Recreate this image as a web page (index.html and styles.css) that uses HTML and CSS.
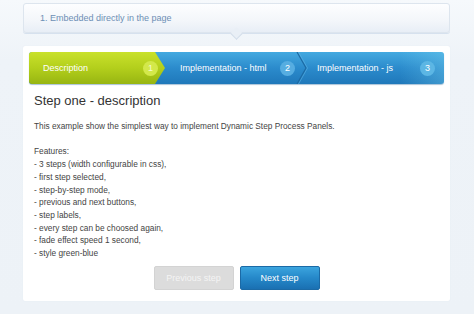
FILE: index.html
```html
<!DOCTYPE HTML>
<html>
    <head>
        <meta charset="UTF-8">
        <title>Dynamic Step Process Panels</title>
        <link rel="stylesheet" href="styles.css">
    </head>
    <body>
        <div id="wrap">
            <div class="demo-title">1. Embedded directly in the page</div>
            <div class="panel">
                <div class="steps">
                    <div class="step step-on">
                        <span class="label">Description</span><span class="num">1</span>
                    </div>
                    <div class="step step-two">
                        <span class="label">Implementation - html</span><span class="num">2</span>
                    </div>
                    <div class="step step-last">
                        <span class="label">Implementation - js</span><span class="num">3</span>
                    </div>
                    <svg class="sep" width="12" height="32" viewBox="0 0 12 32"><polyline points="1,0 10,16 1,32" fill="none" stroke="#1c6aa4" stroke-width="1.2"/><polyline points="2.5,0 11.5,16 2.5,32" fill="none" stroke="#5bb3e4" stroke-width="1" opacity=".6"/></svg>
                </div>
                <h2>Step one - description</h2>
                <p class="text">This example show the simplest way to implement Dynamic Step Process Panels.<br><br>Features:<br>- 3 steps (width configurable in css),<br>- first step selected,<br>- step-by-step mode,<br>- previous and next buttons,<br>- step labels,<br>- every step can be choosed again,<br>- fade effect speed 1 second,<br>- style green-blue</p>
                <div class="buttons">
                    <span class="btn btn-off">Previous step</span>
                    <span class="btn btn-next">Next step</span>
                </div>
            </div>
        </div>
    </body>
</html>
```

FILE: styles.css
```css
body{margin:0;font-family:"Liberation Sans",Arial,sans-serif;background:linear-gradient(to bottom,#f6f9fc 0,#eef3f8 60px,#edf2f7 100%);height:314px;overflow:hidden;}
h2,p{margin:0;}
#wrap{
    width: 427px;
    margin-left: 23px;
    padding-top: 3px;
}
.demo-title{
    position: relative;
    height: 28px;
    padding-left: 16px;
    font-size: 9px;
    line-height: 28px;
    color: #6d8fb5;
    border: 1px solid #dde5ee;
    border-radius: 3px;
    background: linear-gradient(to bottom,#fdfeff 0%,#f3f6fa 60%,#e8eef6 100%);
    box-shadow: 0 1px 0 #d6e1ee;
}
.demo-title:after{
    content: "";
    position: absolute;
    left: 208px;
    bottom: -6px;
    width: 8px;
    height: 8px;
    background: #e9eff6;
    border-right: 1px solid #d2dde9;
    border-bottom: 1px solid #d2dde9;
    transform: rotate(45deg);
}
.panel{
    margin-top: 13px;
    height: 249px;
    padding: 6px 6px 0;
    background: #fff;
    border-radius: 2px;
    box-shadow: 0 0 1px #dbe4ee;
}
.steps{
    position: relative;
    display: flex;
    height: 32px;
    border-radius: 3px;
    background: linear-gradient(to bottom,#43a9e0 0%,#2b8bcc 50%,#1f78ba 100%);
    box-shadow: 0 1px 1px #a9c3d8;
}
.step{
    position: relative;
    display: flex;
    align-items: center;
    width: 138px;
    height: 32px;
    font-size: 9px;
    color: #fff;
}
.step .label{
    flex: 1;
}
.step .num{
    width: 15px;
    height: 15px;
    border-radius: 50%;
    text-align: center;
    line-height: 15px;
    font-size: 9px;
}
.step-on{
    width: 136px;
    margin-right: -10px;
    z-index: 2;
    padding-left: 14px;
    box-sizing: border-box;
    border-radius: 3px 0 0 3px;
    background: linear-gradient(to bottom,#c9e12b 0%,#b3cf1c 50%,#97b512 100%);
    clip-path: polygon(0 0,calc(100% - 10px) 0,100% 50%,calc(100% - 10px) 100%,0 100%);
}
.step-on .num{
    margin-right: 7px;
    background: #d3e84a;
    color: #f4f9d0;
}
.step-two{
    width: 143px;
    padding-left: 25px;
    box-sizing: border-box;
}
.step-two .num{
    margin-right: 3px;
    background: #56ade1;
}
.step-last{
    flex: 1;
    padding-left: 19px;
    border-radius: 0 3px 3px 0;
    background: linear-gradient(to right,rgba(255,255,255,0) 70%,rgba(120,210,240,.35) 100%);
}
.step-last .num{
    margin-right: 9px;
    background: #5cb6e4;
}
.sep{
    position: absolute;
    left: 267px;
    top: 0;
}
h2{
    margin: 9px 0 0 5px;
    font-size: 13px;
    font-weight: normal;
    line-height: 16px;
    color: #333;
}
.text{
    margin: 11px 0 0 5px;
    font-size: 8.3px;
    line-height: 12.7px;
    color: #444;
}
.buttons{
    display: flex;
    justify-content: center;
    gap: 6px;
    margin-top: 6px;
}
.btn{
    width: 78px;
    height: 22px;
    font-size: 9px;
    line-height: 22px;
    text-align: center;
    color: #fff;
    border-radius: 2px;
}
.btn-off{
    background: #dcdcdc;
    border: 1px solid #d3d3d3;
    color: #f4f4f4;
}
.btn-next{
    background: linear-gradient(to bottom,#3ba4de 0%,#2588c9 50%,#1a70b2 100%);
    border: 1px solid #1b6aa6;
}
```
